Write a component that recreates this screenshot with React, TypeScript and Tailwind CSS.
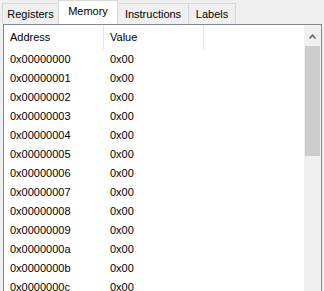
import React from 'react';

const rows = Array.from({ length: 16 }, (_, i) => ({
  address: '0x' + i.toString(16).padStart(8, '0'),
  value: '0x00',
}));

const tabs = [
  { name: 'Registers', w: 'w-[57px]' },
  { name: 'Memory', w: 'w-[60px]' },
  { name: 'Instructions', w: 'w-[72px]' },
  { name: 'Labels', w: 'w-[48px]' },
];

const App: React.FC = () => {
  const active = 'Memory';

  return (
    <div className="w-[324px] h-[291px] overflow-hidden bg-[#f0f0f0] flex flex-col text-[11px] text-black font-['Liberation_Sans',Arial,sans-serif]">
      {/* Tab strip */}
      <div className="h-[24px] flex items-end pl-[2px] shrink-0">
        {tabs.map((tab, i) =>
          tab.name === active ? (
            <div
              key={tab.name}
              className={`${tab.w} relative z-10 -ml-px h-[24px] pb-[3px] flex items-center justify-center bg-white border border-b-0 border-[#d9d9d9]`}
            >
              {tab.name}
            </div>
          ) : (
            <div
              key={tab.name}
              className={`${tab.w} h-[21px] flex items-center justify-center bg-[#f0f0f0] border border-b-0 border-[#d9d9d9] ${i === 0 ? '' : '-ml-px'}`}
            >
              {tab.name}
            </div>
          )
        )}
      </div>

      {/* List view */}
      <div className="ml-[3px] mr-[2px] h-[300px] shrink-0 border border-[#828790] bg-white flex">
        <div className="flex-1 flex flex-col">
          <div className="h-[25px] flex shrink-0">
            <div className="w-[100px] pl-[6px] flex items-center border-r border-[#e5e5e5]">Address</div>
            <div className="w-[100px] pl-[6px] flex items-center border-r border-[#e5e5e5]">Value</div>
          </div>
          {rows.map((r) => (
            <div key={r.address} className="h-[19px] flex items-center shrink-0">
              <div className="w-[100px] pl-[6px]">{r.address}</div>
              <div className="w-[100px] pl-[6px]">{r.value}</div>
            </div>
          ))}
        </div>

        {/* Scrollbar */}
        <div className="w-[17px] bg-[#f0f0f0] flex flex-col">
          <div className="h-[21px] flex items-center justify-center pt-[1px]">
            <svg width="7" height="5" viewBox="0 0 7 5">
              <polyline points="0.5,4.5 3.5,1.2 6.5,4.5" fill="none" stroke="#606060" strokeWidth="1.5" />
            </svg>
          </div>
          <div className="mx-px h-[110px] bg-[#cdcdcd]" />
        </div>
      </div>
    </div>
  );
};

export default App;
